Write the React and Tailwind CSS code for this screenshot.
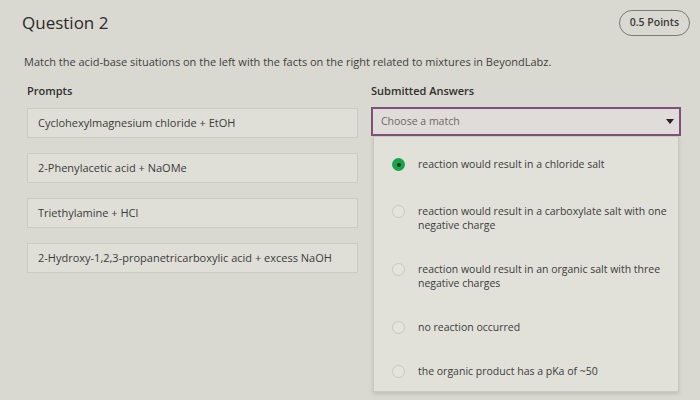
const prompts = [
  "Cyclohexylmagnesium chloride + EtOH",
  "2-Phenylacetic acid + NaOMe",
  "Triethylamine + HCl",
  "2-Hydroxy-1,2,3-propanetricarboxylic acid + excess NaOH",
];

const options = [
  { text: "reaction would result in a chloride salt", selected: true, pad: "pt-[20px] pb-[18px]" },
  { text: "reaction would result in a carboxylate salt with one negative charge", pad: "py-[15px]" },
  { text: "reaction would result in an organic salt with three negative charges", pad: "py-[15px]" },
  { text: "no reaction occurred", pad: "py-[15px]" },
  { text: "the organic product has a pKa of ~50", pad: "py-[15px]" },
];

function Radio({ selected }) {
  if (selected) {
    return (
      <span className="w-[13px] h-[13px] rounded-full bg-[#16a34a] flex items-center justify-center shrink-0 mt-[1px]">
        <span className="w-[4px] h-[4px] rounded-full bg-[#0b3d1e]" />
      </span>
    );
  }
  return <span className="w-[13px] h-[13px] rounded-full border border-[#c9c9c1] bg-[#e4e4dd] shrink-0 mt-[1px]" />;
}

export default function App() {
  return (
    <div
      className="w-[700px] h-[400px] overflow-hidden bg-[#d9d9d1] text-[#3a3a38]"
      style={{ fontFamily: '"Open Sans", "Liberation Sans", sans-serif' }}
    >
      <div className="flex items-center justify-between pl-[22px] pr-[10px] pt-[10px]">
        <h1 className="text-[17px] text-[#2b2b2a] leading-[24px]">Question 2</h1>
        <span className="border border-[#7a7a76] rounded-full px-[10px] h-[26px] flex items-center text-[10.5px] font-semibold text-[#3a3a38]">
          0.5 Points
        </span>
      </div>

      <p className="pl-[24px] mt-[18px] text-[11px] leading-[16px] text-[#3f3f3c]">
        Match the acid-base situations on the left with the facts on the right related to mixtures in BeyondLabz.
      </p>

      <div className="flex pl-[27px] mt-[13px]">
        <div className="w-[331px] flex flex-col">
          <div className="text-[11px] font-semibold text-[#2f2f2d] leading-[16px]">Prompts</div>
          <div className="flex flex-col gap-[15px] mt-[9px]">
            {prompts.map((p) => (
              <div
                key={p}
                className="h-[30px] border border-[#cbcbc3] bg-[#dfdfd8] flex items-center px-[10px] text-[11px] text-[#3b3b39]"
              >
                {p}
              </div>
            ))}
          </div>
        </div>

        <div className="ml-[13px] w-[310px] flex flex-col">
          <div className="text-[11px] font-semibold text-[#2f2f2d] leading-[16px]">Submitted Answers</div>
          <div className="mt-[8px] h-[29px] border-2 border-[#7e5178] bg-[#e0dcd9] flex items-center justify-between pl-[8px] pr-[5px]">
            <span className="text-[10.5px] text-[#6a6a66]">Choose a match</span>
            <svg width="8" height="7" viewBox="0 0 8 7">
              <path d="M0 1 L8 1 L4 6 Z" fill="#222" />
            </svg>
          </div>
          <div className="mx-[2px] bg-[#e1e1da] border border-[#c9c9c1] shadow-[0_2px_4px_rgba(0,0,0,0.12)] h-[256px]">
            {options.map((o) => (
              <div key={o.text} className={`flex gap-[13px] pl-[18px] pr-[8px] ${o.pad}`}>
                <Radio selected={o.selected} />
                <span className="text-[10.5px] leading-[14px] text-[#3c3c3a] max-w-[250px]">{o.text}</span>
              </div>
            ))}
          </div>
        </div>
      </div>
    </div>
  );
}
